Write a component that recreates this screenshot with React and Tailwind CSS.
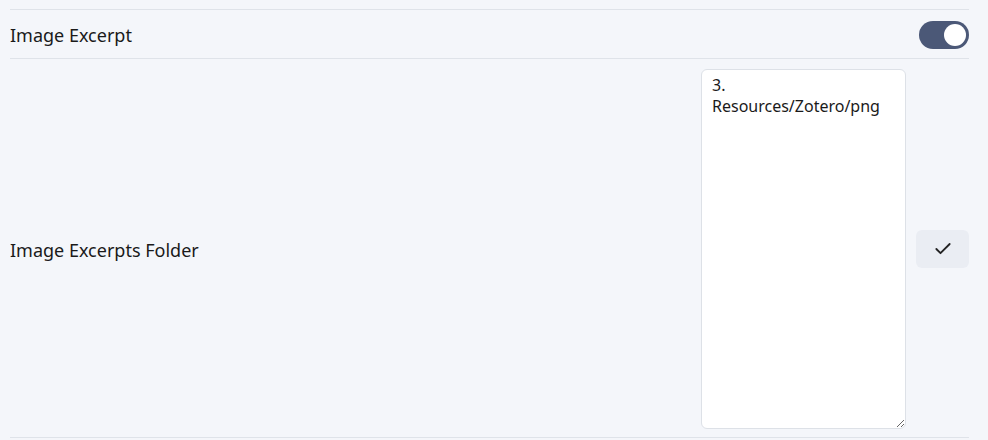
import { Check } from "lucide-react";

function Toggle() {
  return (
    <div className="flex h-[28px] w-[50px] items-center justify-end rounded-full bg-[#4b5877] px-[3px]">
      <div className="h-[22px] w-[22px] rounded-full bg-white" />
    </div>
  );
}

export default function App() {
  return (
    <div
      className="min-h-[440px] bg-[#f4f6fa] pt-[9px] pl-[10px] pr-[19px] text-[#1a1a1a]"
      style={{ fontFamily: '"Noto Sans", "Liberation Sans", sans-serif' }}
    >
      <div className="border-t border-[#dfe3e9]">
        {/* toggle row */}
        <div className="flex h-[49px] items-center justify-between border-b border-[#dfe3e9] pt-[2px]">
          <span className="text-[18px]">Image Excerpt</span>
          <Toggle />
        </div>

        {/* folder row */}
        <div className="flex items-center justify-between border-b border-[#dfe3e9] pt-[10px] pb-[8px]">
          <span className="pt-[2px] text-[18px]">Image Excerpts Folder</span>
          <div className="flex items-center gap-[10px]">
            <textarea
              defaultValue="3. Resources/Zotero/png"
              className="h-[360px] w-[205px] rounded-[6px] border border-[#dde1e7] bg-white px-[10px] py-[5px] text-[16px] leading-[21px] text-[#1a1a1a] outline-none"
            />
            <button className="flex h-[38px] w-[53px] items-center justify-center rounded-[6px] bg-[#eaedf3]">
              <Check size={20} strokeWidth={2.2} className="text-[#222]" />
            </button>
          </div>
        </div>
      </div>
    </div>
  );
}
